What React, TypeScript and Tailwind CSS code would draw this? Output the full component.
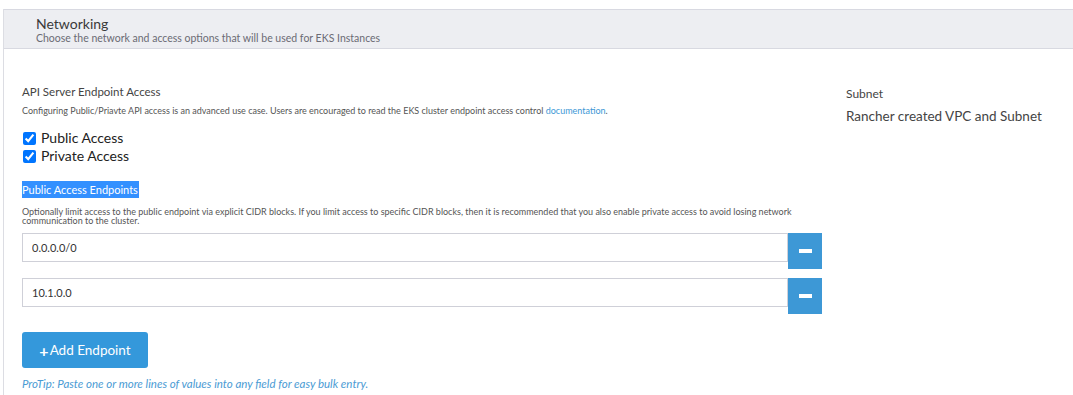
import React from "react";

const MinusButton = () => (
  <button className="w-[34px] h-[36px] bg-[#3d98d6] flex items-center justify-center shrink-0">
    <span className="block w-[13px] h-[4px] bg-white" />
  </button>
);

const EndpointRow = ({ value }: { value: string }) => (
  <div className="flex items-start">
    <input
      type="text"
      defaultValue={value}
      className="w-[766px] h-[29px] border border-[#cfd0d8] px-[9px] text-[11px] text-[#333] outline-none"
    />
    <MinusButton />
  </div>
);

export default function App() {
  return (
    <div className="w-[1073px] h-[395px] overflow-hidden bg-white pt-[9px] pl-[3px] font-['Lato','Noto_Sans',sans-serif]">
      <div className="border-l border-[#dcdde3] h-[400px]">
        <div className="h-[40px] bg-[#edeef2] border-y border-[#d8d9e1] pl-[32px] pt-[5px]">
          <div className="text-[14px] leading-[17px] text-[#3a3a3a]">Networking</div>
          <div className="text-[10.5px] leading-[13px] text-[#6b6b74]">
            Choose the network and access options that will be used for EKS Instances
          </div>
        </div>
        <div className="flex pl-[18px] pt-[36px]">
          <div className="w-[805px]">
            <div className="text-[11.5px] leading-[14px] text-[#444]">API Server Endpoint Access</div>
            <div className="mt-[6px] text-[9px] leading-[11px] text-[#555]">
              Configuring Public/Priavte API access is an advanced use case. Users are encouraged to read the EKS
              cluster endpoint access control <span className="text-[#3d98d6]">documentation</span>.
            </div>
            <label className="mt-[13px] flex items-center gap-[5px] text-[14px] leading-[18px] text-[#222]">
              <input type="checkbox" defaultChecked className="w-[13px] h-[13px] m-0 ml-[1px] accent-[#0075ff]" />
              Public Access
            </label>
            <label className="flex items-center gap-[5px] text-[14px] leading-[18px] text-[#222]">
              <input type="checkbox" defaultChecked className="w-[13px] h-[13px] m-0 ml-[1px] accent-[#0075ff]" />
              Private Access
            </label>
            <div className="mt-[11px]">
              <span className="inline-block bg-[#3390ff] text-white text-[11px] leading-[17px] pr-[1px]">
                Public Access Endpoints
              </span>
            </div>
            <div className="mt-[7px] w-[800px] text-[9px] leading-[9px] text-[#555]">
              Optionally limit access to the public endpoint via explicit CIDR blocks. If you limit access to specific
              CIDR blocks, then it is recommended that you also enable private access to avoid losing network
              communication to the cluster.
            </div>
            <div className="mt-[8px] flex flex-col gap-[9px]">
              <EndpointRow value="0.0.0.0/0" />
              <EndpointRow value="10.1.0.0" />
            </div>
            <button className="mt-[18px] w-[126px] h-[36px] rounded-[3px] bg-[#3498db] text-white text-[13.5px] flex items-center justify-center">
              <span className="text-[16px] font-bold leading-none mr-[1px] mt-[1px]">+</span>Add Endpoint
            </button>
            <div className="mt-[9px] text-[11.5px] leading-[14px] italic text-[#4a9bd4]">
              ProTip: Paste one or more lines of values into any field for easy bulk entry.
            </div>
          </div>
          <div className="ml-[19px] pt-[2px]">
            <div className="text-[12px] leading-[14px] text-[#444]">Subnet</div>
            <div className="mt-[7px] text-[13.5px] leading-[17px] text-[#444]">Rancher created VPC and Subnet</div>
          </div>
        </div>
      </div>
    </div>
  );
}
